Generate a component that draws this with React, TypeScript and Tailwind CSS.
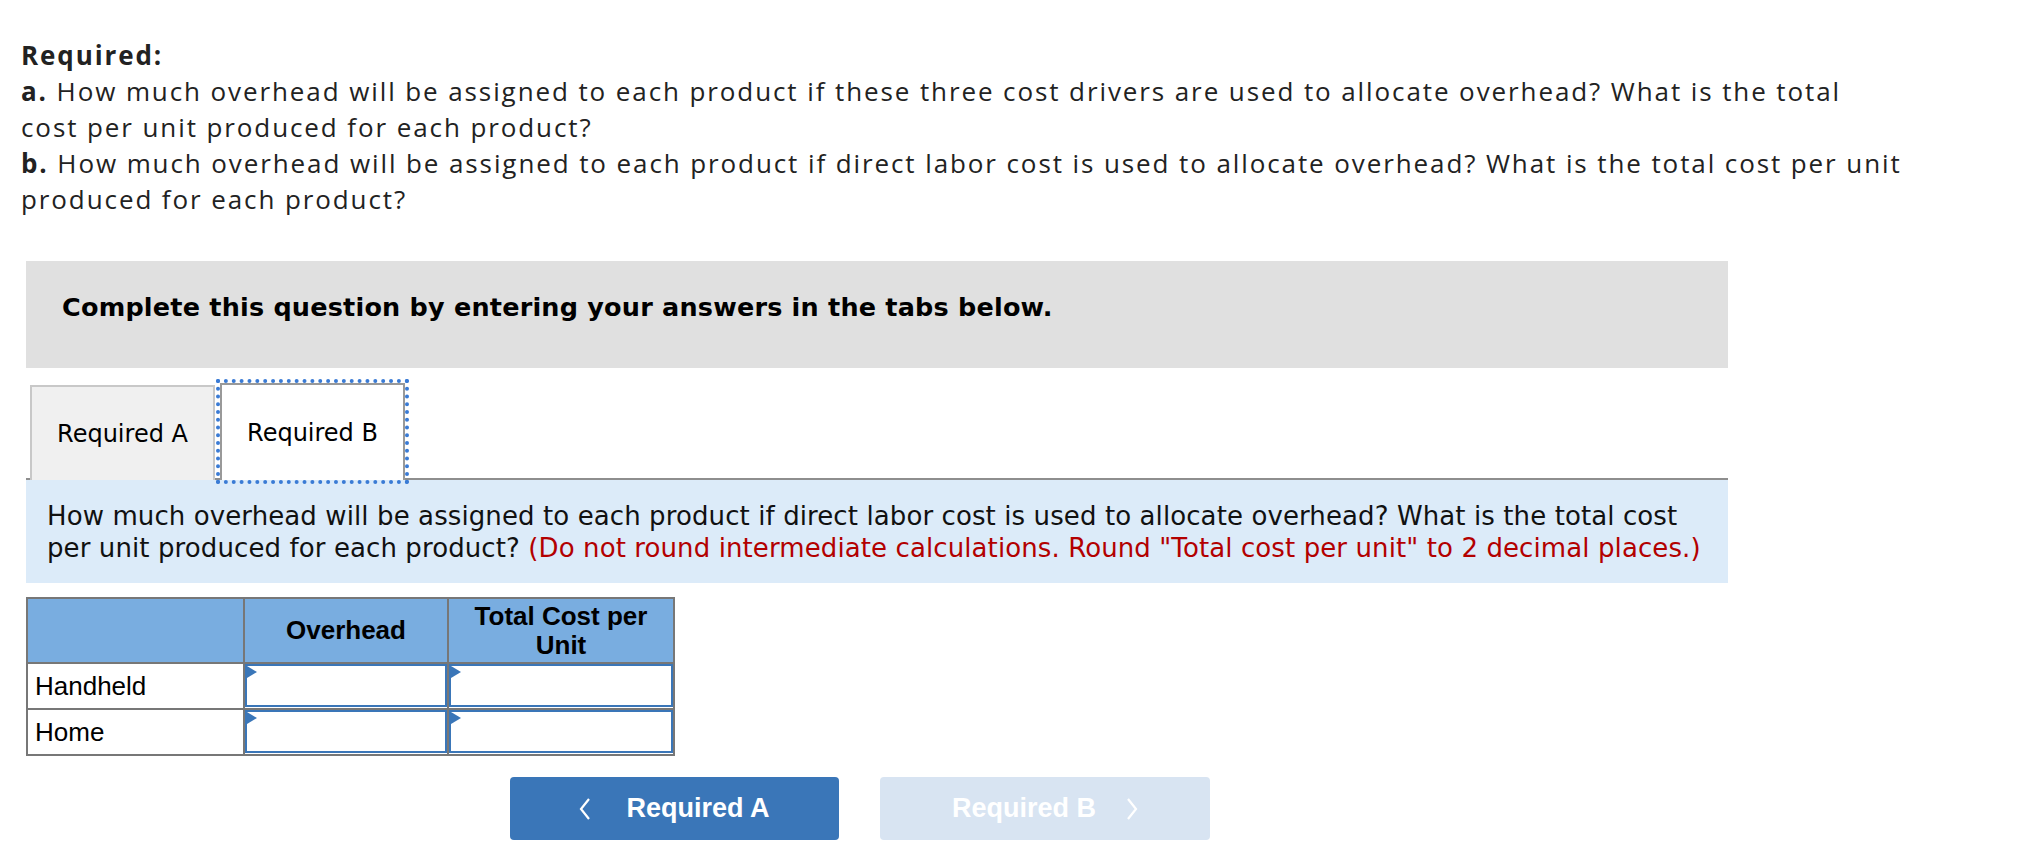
import React from 'react';

const Chevron = ({ dir }: { dir: 'left' | 'right' }) => (
  <svg width="12" height="22" viewBox="0 0 12 22" className="shrink-0">
    <polyline
      points={dir === 'left' ? '10,1 2,11 10,21' : '2,1 10,11 2,21'}
      fill="none"
      stroke="white"
      strokeWidth="2.2"
    />
  </svg>
);

const AnswerCell = () => (
  <td className="border-2 border-[#777] p-0 align-top">
    <div className="relative h-[43px] border-2 border-[#3a76b8] bg-white">
      <svg width="10" height="12" viewBox="0 0 10 12" className="absolute left-0 top-0">
        <polygon points="0,0 10,6 0,12" fill="#3a76b8" />
      </svg>
    </div>
  </td>
);

export default function App() {
  const rows = ['Handheld', 'Home'];

  return (
    <div className="w-[2028px] h-[860px] bg-white overflow-hidden">
      <div className="pl-[21px] pt-[37px] text-[26px] leading-[36px] text-[#222] tracking-[1.9px] font-['Open_Sans',sans-serif]">
        <p className="font-bold">Required:</p>
        <p>
          <b>a.</b> How much overhead will be assigned to each product if these three cost drivers are used to allocate overhead? What is the total
          <br />
          cost per unit produced for each product?
        </p>
        <p>
          <b>b.</b> How much overhead will be assigned to each product if direct labor cost is used to allocate overhead? What is the total cost per unit
          <br />
          produced for each product?
        </p>
      </div>

      <div className="ml-[26px] mt-[44px] w-[1702px]">
        <div className="h-[107px] bg-[#e0e0e0] pl-[36px] pt-[27px] font-['DejaVu_Sans',sans-serif] text-[25.5px] tracking-[0.2px] font-bold text-black">
          Complete this question by entering your answers in the tabs below.
        </div>

        <div className="mt-[15px] flex items-end pl-[4px] border-b-2 border-[#8e8e8e] font-['DejaVu_Sans',sans-serif] text-[24px] text-black">
          <div className="-mb-[2px] flex h-[95px] w-[185px] items-center justify-center border-2 border-b-0 border-[#c8c8c8] bg-[#f0f0f0]">
            Required A
          </div>
          <div className="-mb-[2px] ml-[5px] flex h-[97px] w-[185px] items-center justify-center border-2 border-b-0 border-[#999] bg-white outline-[4px] outline-dotted outline-[#3a7bd5]">
            Required B
          </div>
        </div>

        <div className="h-[103px] bg-[#dcebf9] pl-[21px] pt-[20px] font-['DejaVu_Sans',sans-serif] text-[26px] leading-[32px] tracking-[0.1px] text-[#111]">
          How much overhead will be assigned to each product if direct labor cost is used to allocate overhead? What is the total cost
          <br />
          per unit produced for each product?{' '}
          <span className="text-[#b30000]">(Do not round intermediate calculations. Round "Total cost per unit" to 2 decimal places.)</span>
        </div>

        <table className="mt-[14px] w-[647px] table-fixed border-collapse border-2 border-[#777] font-['Liberation_Sans',Arial,sans-serif] text-[26px] text-black">
          <colgroup>
            <col className="w-[217px]" />
            <col className="w-[204px]" />
            <col className="w-[226px]" />
          </colgroup>
          <thead>
            <tr className="h-[65px] bg-[#79ade0]">
              <th className="border-2 border-[#777]"></th>
              <th className="border-2 border-[#777] font-bold leading-[29px]">Overhead</th>
              <th className="border-2 border-[#777] font-bold leading-[29px]">
                Total Cost per
                <br />
                Unit
              </th>
            </tr>
          </thead>
          <tbody>
            {rows.map((r) => (
              <tr key={r} className="h-[46px]">
                <td className="border-2 border-[#777] pl-[7px] bg-white">{r}</td>
                <AnswerCell />
                <AnswerCell />
              </tr>
            ))}
          </tbody>
        </table>

        <div className="mt-[21px] ml-[484px] flex gap-[41px] font-['Liberation_Sans',Arial,sans-serif] text-[27px] font-bold text-white">
          <button className="flex h-[63px] w-[329px] items-center justify-center gap-[35px] rounded-[4px] bg-[#3a76b8]">
            <Chevron dir="left" />
            <span>Required A</span>
          </button>
          <button className="flex h-[63px] w-[330px] items-center justify-center gap-[30px] rounded-[4px] bg-[#d8e4f2]">
            <span>Required B</span>
            <Chevron dir="right" />
          </button>
        </div>
      </div>
    </div>
  );
}
